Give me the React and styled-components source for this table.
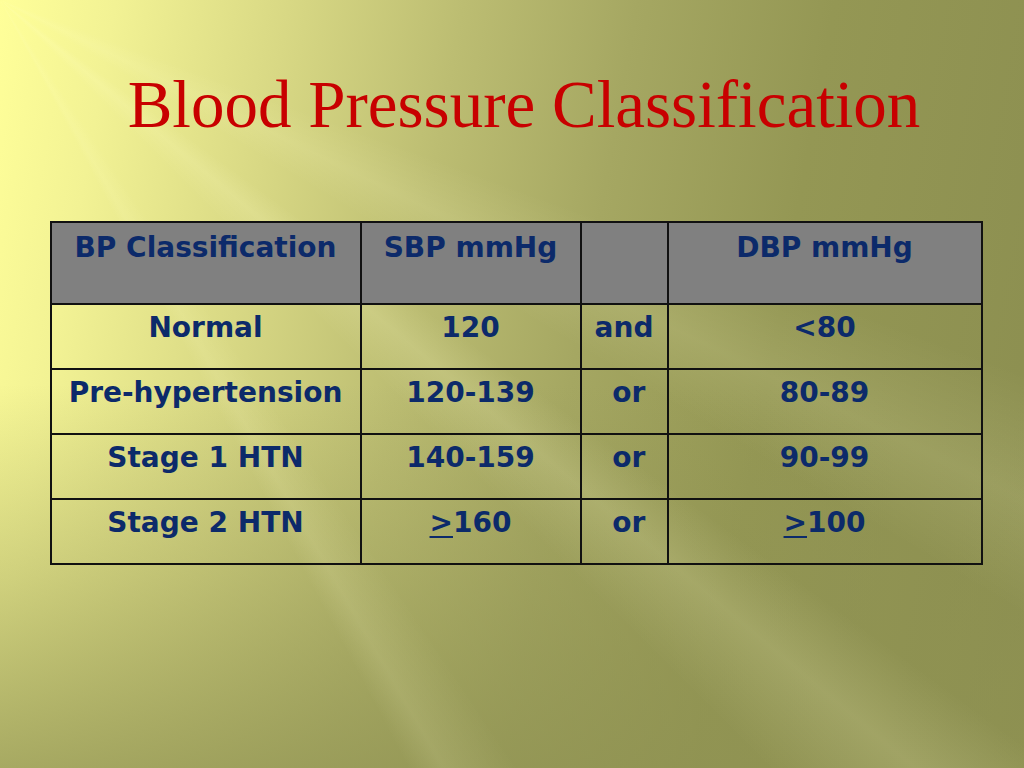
import React from 'react';
import styled, { createGlobalStyle } from 'styled-components';

const GlobalStyle = createGlobalStyle`
  html, body {
    margin: 0;
    padding: 0;
  }
  body {
    width: 1024px;
    height: 768px;
    overflow: hidden;
  }
`;

/* light rays fan out from the top-left corner over a yellow-to-olive wash */
const Slide = styled.div`
  width: 1024px;
  height: 768px;
  box-sizing: border-box;
  display: flex;
  flex-direction: column;
  align-items: center;
  padding-top: 64px;
  background:
    conic-gradient(from 90deg at 0 0,
      rgba(255, 255, 200, 0) 0deg,
      rgba(255, 255, 200, 0) 20deg,
      rgba(255, 255, 200, 0.12) 26deg,
      rgba(255, 255, 200, 0) 31deg,
      rgba(255, 255, 200, 0) 36deg,
      rgba(255, 255, 200, 0.16) 40deg,
      rgba(255, 255, 200, 0) 45deg,
      rgba(255, 255, 200, 0) 56deg,
      rgba(255, 255, 200, 0.12) 60deg,
      rgba(255, 255, 200, 0) 62deg,
      rgba(255, 255, 200, 0) 90deg),
    linear-gradient(to bottom, rgba(143, 146, 82, 0) 50%, rgba(143, 146, 82, 0.35) 75%, rgba(143, 146, 82, 0.75) 100%),
    linear-gradient(100deg, #ffff99 0%, #f2f294 10%, #d8d884 25%, #bcbd72 40%, #a5a762 55%, #949754 72%, #8b8e50 100%);
`;

const Title = styled.h1`
  margin: 0 0 0 24px;
  font-family: "Liberation Serif", "Times New Roman", serif;
  font-weight: normal;
  font-size: 67px;
  line-height: 80px;
  color: #c80000;
  white-space: nowrap;
`;

const Table = styled.table`
  margin: 77px 0 0 8px;
  border-collapse: collapse;
  table-layout: fixed;
  width: 933px;
  font-family: "DejaVu Sans", "Liberation Sans", sans-serif;
  font-weight: bold;
  font-size: 28px;
  color: #0c2a6a;
`;

const HeadCell = styled.th`
  height: 72px;
  padding: 8px 0 0;
  vertical-align: top;
  text-align: center;
  background: #808080;
  border: 2px solid #111;
  font-weight: bold;
  white-space: nowrap;
`;

const Cell = styled.td`
  height: 57px;
  padding: 6px 0 0;
  vertical-align: top;
  text-align: center;
  border: 2px solid #111;
  white-space: nowrap;
`;

const Ge = styled.span`
  text-decoration: underline;
  text-underline-offset: 4px;
`;

const cols = [310, 220, 87, 314];

const rows = [
  ['Normal', '120', 'and', '<80'],
  ['Pre-hypertension', '120-139', '\u00a0or', '80-89'],
  ['Stage 1 HTN', '140-159', '\u00a0or', '90-99'],
  ['Stage 2 HTN', <><Ge>&gt;</Ge>160</>, '\u00a0or', <><Ge>&gt;</Ge>100</>],
];

export default function App() {
  return (
    <Slide>
      <GlobalStyle />
      <Title>Blood Pressure Classification</Title>
      <Table>
        <colgroup>
          {cols.map((w, i) => <col key={i} style={{ width: w }} />)}
        </colgroup>
        <thead>
          <tr>
            <HeadCell>BP Classification</HeadCell>
            <HeadCell>SBP mmHg</HeadCell>
            <HeadCell></HeadCell>
            <HeadCell>DBP mmHg</HeadCell>
          </tr>
        </thead>
        <tbody>
          {rows.map((r, i) => (
            <tr key={i}>
              {r.map((c, j) => <Cell key={j}>{c}</Cell>)}
            </tr>
          ))}
        </tbody>
      </Table>
    </Slide>
  );
}
